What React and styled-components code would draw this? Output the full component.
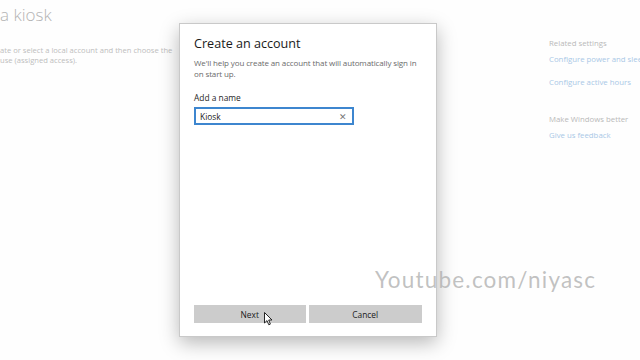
import React from 'react';
import styled, { createGlobalStyle } from 'styled-components';

const Global = createGlobalStyle`
  html, body { margin: 0; padding: 0; }
  body {
    width: 640px;
    height: 360px;
    overflow: hidden;
    background: #fefefe;
    font-family: "Open Sans", "Noto Sans", sans-serif;
  }
`;

const Page = styled.div`
  position: relative;
  width: 640px;
  height: 360px;
  display: flex;
  justify-content: space-between;
  overflow: hidden;
`;

const LeftCol = styled.div`
  padding-top: 4px;
  width: 180px;
`;

const PageTitle = styled.h1`
  margin: 0;
  font-weight: 300;
  font-size: 17px;
  line-height: 22px;
  color: #b4b4b4;
`;

const PageText = styled.p`
  margin: 19px 0 0;
  font-size: 7.6px;
  line-height: 10px;
  color: #bdbdbd;
  white-space: pre;
`;

const RightCol = styled.div`
  width: 91px;
  padding-top: 38px;
  display: flex;
  flex-direction: column;
  white-space: nowrap;
`;

const SideHead = styled.div`
  font-size: 7.8px;
  line-height: 10px;
  color: #b9b9b9;
  margin-top: ${p => p.$gap || 0}px;
`;

const SideLink = styled.div`
  font-size: 7.8px;
  line-height: 10px;
  color: #a9c8e6;
  margin-top: ${p => p.$gap || 0}px;
`;

const Dialog = styled.div`
  position: absolute;
  left: 179px;
  top: 23px;
  width: 258px;
  height: 314px;
  background: #fff;
  border: 1px solid #c9c9c9;
  box-shadow: 0 6px 18px rgba(0, 0, 0, 0.28);
  box-sizing: border-box;
  padding: 12px 14px 13px;
  display: flex;
  flex-direction: column;
`;

const DTitle = styled.h2`
  margin: 0;
  font-weight: 400;
  font-size: 12.6px;
  line-height: 16px;
  color: #1a1a1a;
`;

const DText = styled.p`
  margin: 5px 0 0;
  font-size: 8px;
  line-height: 11px;
  color: #6b6b6b;
  letter-spacing: -0.12px;
`;

const Label = styled.div`
  margin-top: 13px;
  font-size: 8.4px;
  line-height: 11px;
  color: #1e1e1e;
`;

const Field = styled.div`
  margin-top: 4px;
  width: 160px;
  height: 18px;
  box-sizing: border-box;
  border: 2px solid #3d86cf;
  display: flex;
  align-items: center;
  justify-content: space-between;
  padding: 0 5px 0 4px;
  font-size: 8.4px;
  color: #1a1a1a;
`;

const Clear = styled.span`
  color: #777;
  font-size: 9px;
`;

const Spacer = styled.div`
  flex: 1;
`;

const Buttons = styled.div`
  display: flex;
  gap: 3px;
`;

const Button = styled.div`
  position: relative;
  width: ${p => p.$w}px;
  height: 18px;
  background: #cccccc;
  display: flex;
  align-items: center;
  justify-content: center;
  font-size: 8.4px;
  color: #1a1a1a;
`;

const Cursor = styled.svg`
  position: absolute;
  left: 70px;
  top: 7px;
`;

const Watermark = styled.div`
  position: absolute;
  left: 375px;
  top: 266px;
  font-family: "Lato", "Open Sans", sans-serif;
  font-size: 22.5px;
  color: rgba(170, 170, 170, 0.72);
  letter-spacing: 1.2px;
`;

export default function App() {
  return (
    <>
      <Global />
      <Page>
        <LeftCol>
          <PageTitle>a kiosk</PageTitle>
          <PageText>{'ate or select a local account and then choose the\nuse (assigned access).'}</PageText>
        </LeftCol>
        <RightCol>
          <SideHead>Related settings</SideHead>
          <SideLink $gap={6}>Configure power and sleep</SideLink>
          <SideLink $gap={13}>Configure active hours</SideLink>
          <SideHead $gap={27}>Make Windows better</SideHead>
          <SideLink $gap={6}>Give us feedback</SideLink>
        </RightCol>
        <Dialog>
          <DTitle>Create an account</DTitle>
          <DText>We'll help you create an account that will automatically sign in on start up.</DText>
          <Label>Add a name</Label>
          <Field>
            <span>Kiosk</span>
            <Clear>✕</Clear>
          </Field>
          <Spacer />
          <Buttons>
            <Button $w={112}>
              Next
              <Cursor width="9" height="14" viewBox="0 0 9 14">
                <path d="M0.5 0.5 L0.5 11 L3 8.6 L4.8 12.8 L6.4 12.1 L4.7 8 L8 8 Z" fill="#fff" stroke="#111" strokeWidth="0.9" strokeLinejoin="round" />
              </Cursor>
            </Button>
            <Button $w={114}>Cancel</Button>
          </Buttons>
        </Dialog>
        <Watermark>Youtube.com/niyasc</Watermark>
      </Page>
    </>
  );
}
